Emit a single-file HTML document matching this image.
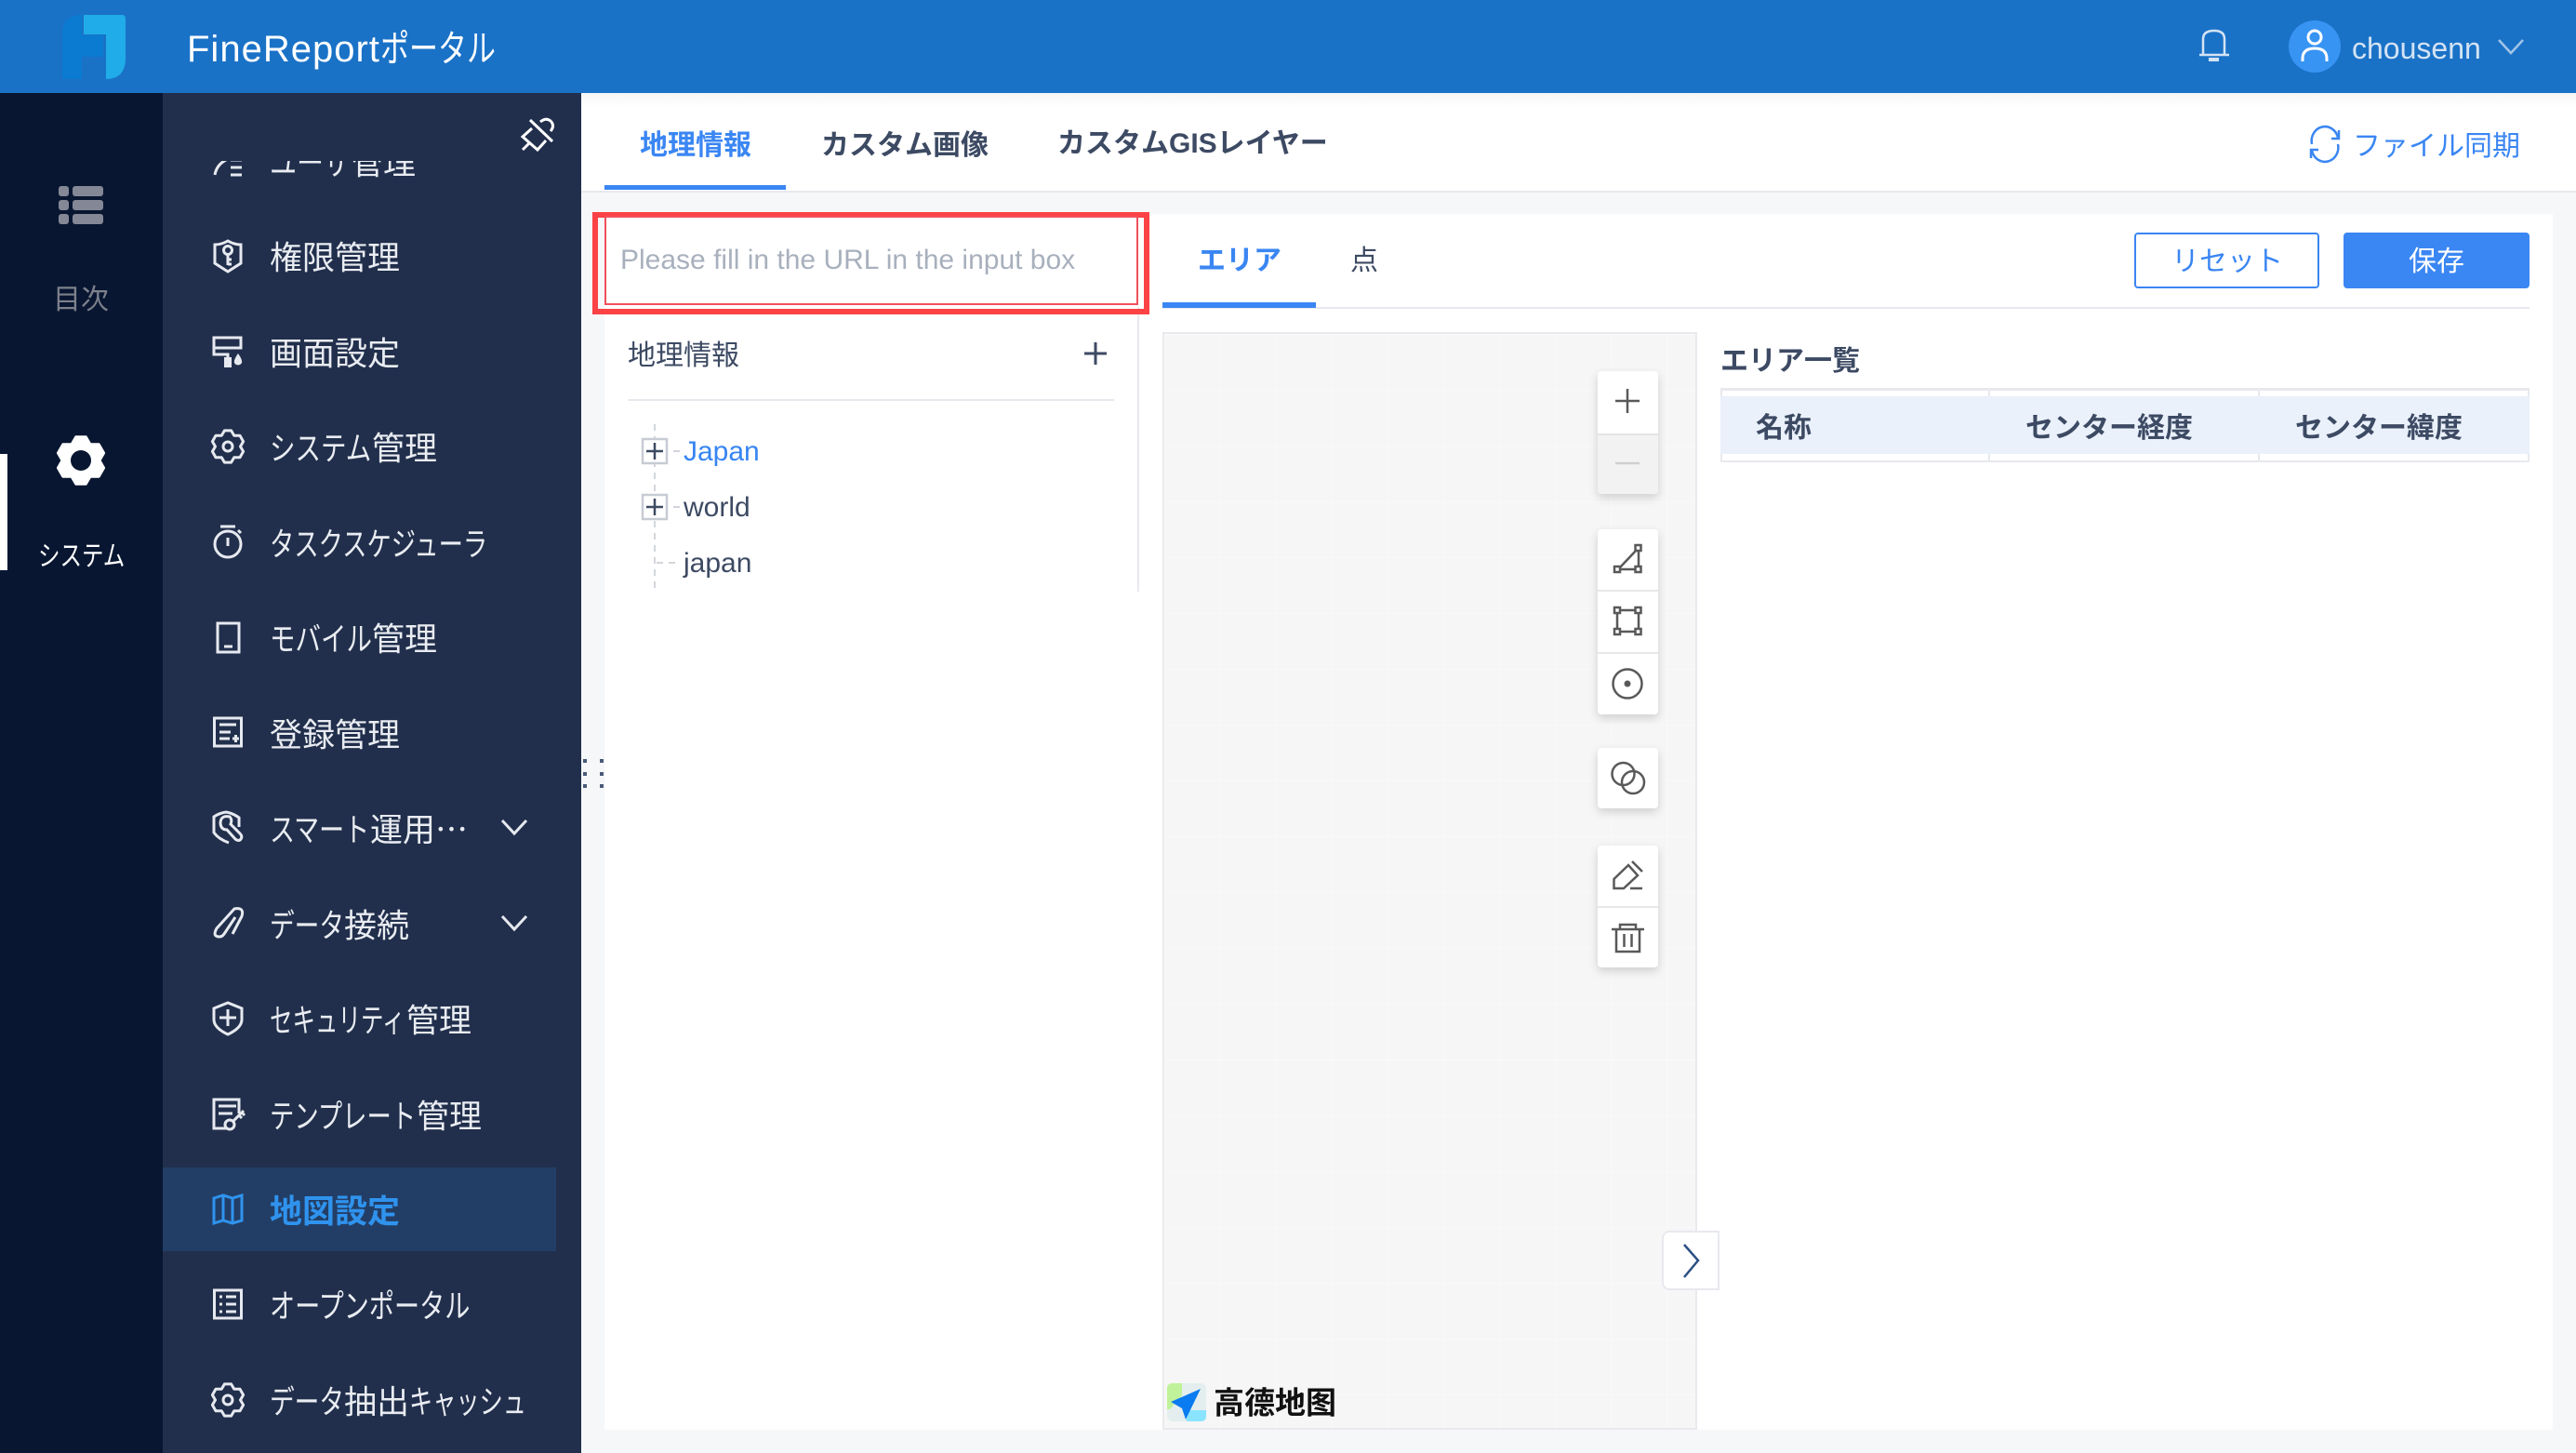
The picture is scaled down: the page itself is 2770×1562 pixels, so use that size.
<!DOCTYPE html>
<html lang="ja"><head><meta charset="utf-8"><title>FineReport</title>
<style>
html,body{margin:0;padding:0;width:2770px;height:1562px;overflow:hidden;background:#f6f7f9}
body{position:relative;font-family:"Noto Sans CJK JP","Liberation Sans",sans-serif}
.a{position:absolute;box-sizing:border-box}
.t{position:absolute;white-space:nowrap;line-height:1;transform:translateY(-50%)}
.s{font-size:35px;color:#e9ecf1;left:290px}
.b{font-weight:700;color:#3d4a63}
.l{font-family:"Liberation Sans","Noto Sans CJK JP",sans-serif}
.x{display:inline-block;transform-origin:0 50%}
svg{position:absolute;left:0;top:0}
</style></head><body>

<div class="a" style="left:0;top:0;width:2770px;height:100px;background:#1a72c7"></div>
<div class="a" style="left:0;top:100px;width:175px;height:1462px;background:#081631"></div>
<div class="a" style="left:175px;top:100px;width:450px;height:1462px;background:#212f4c"></div>
<div class="a" style="left:0;top:488px;width:8px;height:125px;background:#fff"></div>

<div class="a" style="left:175px;top:1255px;width:423px;height:90px;background:#233e66"></div>

<div class="t s" style="top:173px"><span class="x" style="width:87px;transform:scaleX(.83)">ユーザ</span>管理</div>
<svg width="2770" height="1562" style="pointer-events:none"><g fill="none" stroke="#e6e9ef" stroke-width="3"><path d="M231 188Q233 177 243 172M248 172H260M248 180H260M248 188H260"/></g></svg>
<div class="a" style="left:175px;top:100px;width:450px;height:73px;background:#212f4c"></div>

<!-- Main white surfaces -->
<div class="a" style="left:625px;top:100px;width:2145px;height:107px;background:linear-gradient(#f6f6f6,#fff 16px);border-bottom:2px solid #e8e9ee"></div>
<div class="a" style="left:650px;top:230px;width:2095px;height:1307px;background:#fff"></div>
<div class="a" style="left:1223px;top:330px;width:2px;height:306px;background:#e8e9ee"></div>
<div class="a" style="left:675px;top:429px;width:523px;height:2px;background:#e8e9ee"></div>
<div class="a" style="left:1250px;top:330px;width:1470px;height:2px;background:#e8e9ee"></div>
<div class="a" style="left:1250px;top:325px;width:165px;height:6px;background:#3a86f3"></div>
<div class="a" style="left:650px;top:199px;width:195px;height:5px;background:#3a86f3"></div>

<!-- Highlight boxes -->
<div class="a" style="left:637px;top:228px;width:599px;height:110px;border:6px solid #fb4245"></div>
<div class="a" style="left:650px;top:232px;width:574px;height:96px;border:2px solid #f0505a"></div>

<!-- Map -->
<div class="a" style="left:1250px;top:357px;width:575px;height:1180px;background-color:#f6f6f6;background-image:linear-gradient(rgba(255,255,255,.35) 1px,transparent 1px),linear-gradient(90deg,rgba(255,255,255,.35) 1px,transparent 1px);background-size:60px 60px;border:2px solid #e9e9ee"></div>

<!-- Map controls -->
<div class="a" style="left:1718px;top:399px;width:65px;height:132px;background:#fff;border-radius:4px;box-shadow:0 4px 10px rgba(0,0,0,.16)"></div>
<div class="a" style="left:1718px;top:466px;width:65px;height:65px;background:#f2f2f2;border-top:2px solid #e4e4e4;border-radius:0 0 4px 4px"></div>
<div class="a" style="left:1718px;top:569px;width:65px;height:199px;background:#fff;border-radius:4px;box-shadow:0 4px 10px rgba(0,0,0,.16)"></div>
<div class="a" style="left:1718px;top:634px;width:65px;height:2px;background:#e8e8e8"></div>
<div class="a" style="left:1718px;top:701px;width:65px;height:2px;background:#e8e8e8"></div>
<div class="a" style="left:1718px;top:804px;width:65px;height:65px;background:#fff;border-radius:4px;box-shadow:0 4px 10px rgba(0,0,0,.16)"></div>
<div class="a" style="left:1718px;top:909px;width:65px;height:131px;background:#fff;border-radius:4px;box-shadow:0 4px 10px rgba(0,0,0,.16)"></div>
<div class="a" style="left:1718px;top:974px;width:65px;height:2px;background:#e8e8e8"></div>

<!-- Collapse -->
<div class="a" style="left:1787px;top:1323px;width:62px;height:64px;background:#fff;border:2px solid #e8e9ee;border-radius:8px 0 0 8px"></div>

<!-- Area table -->
<div class="a" style="left:1850px;top:417px;width:870px;height:80px;background:#fff;border:2px solid #e8e9ee;border-top-width:3px"></div>
<div class="a" style="left:1850px;top:426px;width:870px;height:62px;background:#eaf1fb"></div>
<div class="a" style="left:2138px;top:419px;width:2px;height:7px;background:#e8e9ee"></div>
<div class="a" style="left:2428px;top:419px;width:2px;height:7px;background:#e8e9ee"></div>
<div class="a" style="left:2138px;top:488px;width:2px;height:8px;background:#e8e9ee"></div>
<div class="a" style="left:2428px;top:488px;width:2px;height:8px;background:#e8e9ee"></div>

<!-- Buttons -->
<div class="a" style="left:2295px;top:250px;width:199px;height:60px;background:#fff;border:2px solid #3a86f3;border-radius:4px"></div>
<div class="a" style="left:2520px;top:250px;width:200px;height:60px;background:#3a86f3;border-radius:4px"></div>

<svg width="2770" height="1562" viewBox="0 0 2770 1562">
<defs>
<path id="gear" d="M-3.6-17.1L3.6-17.1L6.75-11.7L13-11.7L16.6-5.4L13.5 0L16.6 5.4L13 11.7L6.75 11.7L3.6 17.1L-3.6 17.1L-6.75 11.7L-13 11.7L-16.6 5.4L-13.5 0L-16.6-5.4L-13-11.7L-6.75-11.7Z"/>
</defs>

<!-- Logo -->
<path d="M67 36Q67 16 88 16V38H111V61H88V85H67Z" fill="#0a7bd0"/>
<path d="M90 16H131Q135 16 135 20V62Q135 85 114 85V37H90Z" fill="#20ace8"/>

<!-- Bell, avatar, chevron -->
<g fill="none" stroke="#d3e3f4" stroke-width="2.5">
<path d="M2369 58V42Q2369 33 2381 33Q2392 33 2392 42V58M2365 59H2397"/>
</g>
<rect x="2375" y="62" width="11" height="4" fill="#d3e3f4"/>
<circle cx="2489" cy="50" r="28" fill="#3794f3"/>
<circle cx="2489" cy="40" r="7" fill="none" stroke="#fff" stroke-width="3"/>
<path d="M2476 66V63Q2476 52 2489 52Q2502 52 2502 63V66" fill="none" stroke="#fff" stroke-width="3"/>
<path d="M2687 43L2700 57L2713 43" fill="none" stroke="#a2c4e8" stroke-width="2.5"/>

<!-- Rail icons -->
<g fill="#848896">
<rect x="63" y="200" width="11" height="11" rx="3"/><rect x="78" y="200" width="33" height="11" rx="3"/>
<rect x="63" y="215" width="11" height="11" rx="3"/><rect x="78" y="215" width="33" height="11" rx="3"/>
<rect x="63" y="230" width="11" height="11" rx="3"/><rect x="78" y="230" width="33" height="11" rx="3"/>
</g>
<use href="#gear" transform="translate(87,495) scale(1.48)" fill="#fff" stroke="#fff" stroke-width="2" stroke-linejoin="round"/>
<circle cx="87" cy="495" r="11" fill="#081631"/>

<!-- Pin -->
<g fill="none" stroke="#fff" stroke-width="3">
<path d="M570 129L594 152"/>
<path d="M572 138L562 147L578 161L587 151"/>
<path d="M569 154L562 161"/>
<path d="M581 131Q587 126 592 130Q597 135 592 141"/>
</g>

<!-- Sidebar icons -->
<g fill="none" stroke="#e6e9ef" stroke-width="3">
<g transform="translate(245,275)"><path d="M-14-12Q-7-12 0-16Q7-12 14-12V8L0 17L-14 8Z"/><circle cx="0" cy="-6" r="4.5"/><path d="M0-1V10M0 4H4M0 9H4"/></g>
<g transform="translate(245,378)"><path d="M-15-4V-15H14V-4H-15"/><path d="M-15-4V3H0V6"/><rect x="-4" y="6" width="8" height="11" fill="#e6e9ef" stroke="none"/><path d="M11 2Q16 9 15 12A4.5 4.5 0 0 1 7 12Q6 9 11 2Z" fill="#e6e9ef" stroke="none"/></g>
<g transform="translate(245,480)"><use href="#gear" stroke-linejoin="round"/><circle r="5"/></g>
<g transform="translate(245,583)"><circle cy="2" r="14"/><path d="M-8-17H8M0-5V4M11-13L14-10"/></g>
<g transform="translate(245,685)"><rect x="-11" y="-15" width="23" height="31"/><path d="M-4 10H5"/></g>
<g transform="translate(245,787)"><rect x="-14.5" y="-15" width="29" height="30"/><path d="M-9-8H9M-9 0H3M-9 7H2M5 7H12M8.5 3V11"/></g>
<path d="M257 889V879Q250 874 243 873Q236 874 230 878V895Q235 902 246 906"/>
<path d="M247 878Q238 876 237 884Q237 892 244 892L253 902Q257 905 259 902Q261 899 258 896L248 886Q250 881 247 878Z"/>
<path d="M250 1004L260 985Q263 975 252 977L233 998Q228 1007 236 1007Q239 1007 241 1004L253 986"/>
<g transform="translate(245,1095)"><path d="M-15-11L0-17L15-11V1Q15 10 0 17Q-15 10-15 1Z"/><path d="M-9-1H9M0-10V8"/></g>
<g transform="translate(245,1198)"><path d="M-2 15H-15V-16H12V-1"/><path d="M-10-9H9M-10-1H5"/><circle cx="2" cy="11" r="5"/><path d="M6 7L17-4M12 1L15 4M15-2L18 1"/></g>
<g transform="translate(245,1300)" stroke="#2f93ee"><path d="M-15-12L-5-15L5-12L15-15V12L5 15L-5 12L-15 15ZM-5-15V12M5-12V15"/></g>
<g transform="translate(245,1402)"><rect x="-14.5" y="-15" width="29" height="30"/><path d="M-9-8H-6M-2-8H9M-9 0H-6M-2 0H9M-9 8H-6M-2 8H9"/></g>
<g transform="translate(245,1505)"><use href="#gear" stroke-linejoin="round"/><circle r="5"/></g>
<path d="M540 882L553 896L566 882M540 985L553 999L566 985"/>
</g>

<!-- Sync icon -->
<g fill="none" stroke="#3a86f3" stroke-width="2.5">
<path d="M2486 155A14 15 0 0 1 2514 148M2514 155A14 15 0 0 1 2486 162"/>
<path d="M2515 140V149H2507M2485 170V161H2493"/>
</g>

<!-- Tree lines and icons -->
<path d="M1178 368V392M1166 380H1190" stroke="#3d4a63" stroke-width="3" fill="none"/>
<path d="M704 456V634" stroke="#d2d5dc" stroke-width="2" stroke-dasharray="7 6" fill="none"/>
<path d="M724 485H733M724 545H733M706 605H732" stroke="#d2d5dc" stroke-width="2" stroke-dasharray="7 6" fill="none"/>
<rect x="691" y="472" width="26" height="26" fill="#fff" stroke="#c7cbd3" stroke-width="2.5"/>
<rect x="691" y="532" width="26" height="26" fill="#fff" stroke="#c7cbd3" stroke-width="2.5"/>
<path d="M695 485H713M704 476V494M695 545H713M704 536V554" stroke="#3d4a63" stroke-width="2.5" fill="none"/>

<!-- Map toolbar icons -->
<g fill="none" stroke="#595959" stroke-width="2.5">
<path d="M1737 431H1763M1750 418V444"/>
<path d="M1737 498H1763" stroke="#cfcfcf"/>
<path d="M1742 610L1759 592M1762 592V609M1742 612H1759"/>
<rect x="1736" y="609" width="6" height="6"/><rect x="1758.500" y="609" width="6" height="6"/><rect x="1758.500" y="586" width="6" height="6"/>
<path d="M1742 656H1759M1742 679H1759M1739 659V676M1762 659V676"/>
<rect x="1736" y="653" width="6" height="6"/><rect x="1758.500" y="653" width="6" height="6"/><rect x="1736" y="676" width="6" height="6"/><rect x="1758.500" y="676" width="6" height="6"/>
<circle cx="1750" cy="735" r="15.500"/>
<circle cx="1745.500" cy="832" r="12"/><circle cx="1756" cy="841" r="12"/>
<path d="M1735.500 955V945L1751 930L1761 941L1746 955Z"/><path d="M1755 926L1766 937M1753 955H1766"/>
<path d="M1733 999H1768M1742 999V994H1759V999"/><path d="M1738 999V1023H1763V999M1746.500 1004V1018M1754.500 1004V1018"/>
</g>
<circle cx="1750" cy="735" r="3.500" fill="#595959"/>

<!-- Collapse chevron -->
<path d="M1811 1338L1826 1355L1811 1373" fill="none" stroke="#2b4f83" stroke-width="2.500"/>

<!-- Amap logo -->
<rect x="1255" y="1487" width="42" height="41" rx="6" fill="#e4eeee"/>
<path d="M1255 1515V1493Q1255 1487 1261 1487H1271V1500L1258 1515Z" fill="#bff29a"/>
<path d="M1276 1516H1297V1522Q1297 1528 1291 1528H1276Z" fill="#8ae4ff"/>
<path d="M1259 1507L1291 1493L1275 1526L1271 1514Z" fill="#0a7bf0"/>
</svg>

<!-- Text -->
<div class="t l" style="left:201px;top:53px;font-size:40px;color:#fff"><span style="letter-spacing:1px">FineReport</span><span class="x" style="width:124px;transform:scaleX(.775)">ポータル</span></div>
<div class="t l" style="left:2529px;top:52px;font-size:32px;color:#d3e3f4">chousenn</div>
<div class="t" style="left:57px;top:319px;font-size:30px;color:#7d818c">目次</div>
<div class="t" style="left:41px;top:595px;font-size:30px;color:#fff"><span class="x" style="width:94px;transform:scaleX(.783)">システム</span></div>

<div class="t s" style="top:275px">権限管理</div>
<div class="t s" style="top:378px">画面設定</div>
<div class="t s" style="top:480px"><span class="x" style="width:110px;transform:scaleX(.786)">システム</span>管理</div>
<div class="t s" style="top:583px"><span class="x" style="width:237px;transform:scaleX(.752)">タスクスケジューラ</span></div>
<div class="t s" style="top:685px"><span class="x" style="width:110px;transform:scaleX(.786)">モバイル</span>管理</div>
<div class="t s" style="top:788px">登録管理</div>
<div class="t s" style="top:890px"><span class="x" style="width:108px;transform:scaleX(.771)">スマート</span>運用…</div>
<div class="t s" style="top:993px"><span class="x" style="width:80px;transform:scaleX(.762)">データ</span>接続</div>
<div class="t s" style="top:1095px"><span class="x" style="width:147px;transform:scaleX(.7)">セキュリティ</span>管理</div>
<div class="t s" style="top:1198px"><span class="x" style="width:158px;transform:scaleX(.752)">テンプレート</span>管理</div>
<div class="t s" style="top:1300px;color:#2f93ee;font-weight:700">地図設定</div>
<div class="t s" style="top:1402px"><span class="x" style="width:217px;transform:scaleX(.775)">オープンポータル</span></div>
<div class="t s" style="top:1505px"><span class="x" style="width:80px;transform:scaleX(.762)">データ</span>抽出<span class="x" style="width:126px;transform:scaleX(.72)">キャッシュ</span></div>

<div class="t b" style="left:688px;top:153px;font-size:30px;color:#3a86f3">地理情報</div>
<div class="t b" style="left:883px;top:153px;font-size:30px">カスタム画像</div>
<div class="t b l" style="left:1137px;top:155px;font-size:30px">カスタムGISレイヤー</div>
<div class="t" style="left:2530px;top:154px;font-size:30px;color:#3a86f3">ファイル同期</div>

<div class="t l" style="left:667px;top:280px;font-size:30px;color:#a8b0bd">Please fill in the URL in the input box</div>
<div class="t" style="left:675px;top:379px;font-size:30px;color:#3d4a63">地理情報</div>
<div class="t l" style="left:735px;top:486px;font-size:30px;color:#3685f2">Japan</div>
<div class="t l" style="left:735px;top:546px;font-size:30px;color:#3d4a63">world</div>
<div class="t l" style="left:735px;top:606px;font-size:30px;color:#3d4a63">japan</div>

<div class="t b" style="left:1288px;top:277px;font-size:30px;color:#3a86f3">エリア</div>
<div class="t" style="left:1452px;top:277px;font-size:30px;color:#3d4a63">点</div>
<div class="t" style="left:2335px;top:278px;font-size:30px;color:#3a86f3">リセット</div>
<div class="t" style="left:2590px;top:278px;font-size:30px;color:#fff">保存</div>

<div class="t b" style="left:1850px;top:385px;font-size:30px">エリア一覧</div>
<div class="t b" style="left:1888px;top:457px;font-size:30px">名称</div>
<div class="t b" style="left:2178px;top:457px;font-size:30px">センター経度</div>
<div class="t b" style="left:2468px;top:457px;font-size:30px">センター緯度</div>

<div class="t" style="left:1305px;top:1506px;font-family:'Noto Sans CJK SC',sans-serif;font-weight:700;font-size:33px;color:#111">高德地图</div>

<!-- Resize handle -->
<svg width="2770" height="1562" style="pointer-events:none"><g fill="#4a5a78"><rect x="627" y="816" width="4" height="4"/><rect x="627" y="830" width="4" height="4"/><rect x="627" y="843" width="4" height="4"/><rect x="645" y="816" width="4" height="4"/><rect x="645" y="830" width="4" height="4"/><rect x="645" y="843" width="4" height="4"/></g></svg>
</body></html>
